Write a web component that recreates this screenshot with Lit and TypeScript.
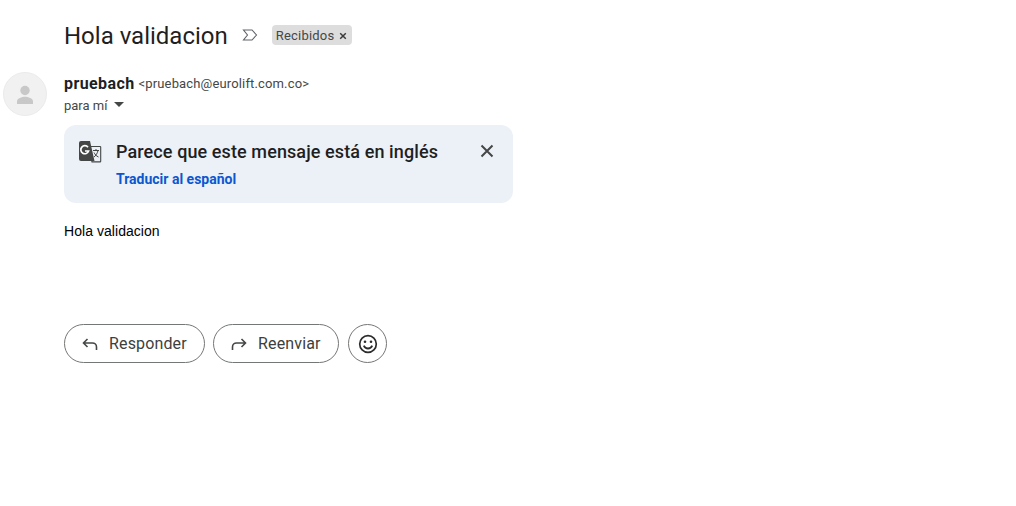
import { LitElement, html, css } from "lit";
import { customElement } from "lit/decorators.js";

@customElement("app-root")
export class AppRoot extends LitElement {
  static styles = css`
    :host {
      display: block;
      width: 1016px;
      height: 506px;
      background: #fff;
      overflow: hidden;
      font-family: Roboto, "Liberation Sans", sans-serif;
      color: #1f1f1f;
    }
    .subject {
      display: flex;
      align-items: center;
      height: 32px;
      margin: 19px 0 0 64px;
    }
    .subject h1 {
      margin: 0;
      padding-top: 2px;
      font-size: 24px;
      font-weight: 400;
      line-height: 32px;
      color: #1f1f1f;
    }
    .marker {
      display: block;
      margin-left: 14px;
      width: 16px;
      height: 14px;
    }
    .label {
      display: flex;
      align-items: center;
      height: 20px;
      margin-left: 14px;
      padding: 0 5px 0 4px;
      border-radius: 4px;
      background: #dddddd;
      color: #444746;
      font-size: 13px;
      letter-spacing: 0.2px;
    }
    .label svg {
      display: block;
      margin-left: 5px;
      margin-top: 1px;
    }
    .message {
      display: flex;
      margin-top: 21px;
      padding-left: 3px;
    }
    .avatar {
      flex: none;
      width: 44px;
      height: 44px;
      box-sizing: border-box;
      border-radius: 50%;
      border: 1px solid #ebebeb;
      background: #f1f1f1;
      margin-right: 17px;
    }
    .avatar svg {
      display: block;
    }
    .body {
      width: 449px;
    }
    .sender {
      display: flex;
      align-items: center;
      height: 20px;
      margin-top: 1px;
    }
    .name {
      font-size: 16px;
      font-weight: 700;
      letter-spacing: 0.4px;
      color: #1f1f1f;
    }
    .addr {
      margin-left: 4px;
      margin-top: 1px;
      font-size: 13px;
      letter-spacing: 0.15px;
      color: #444746;
    }
    .to {
      display: flex;
      align-items: center;
      height: 20px;
      margin-top: 2px;
      font-size: 13px;
      color: #444746;
    }
    .to i {
      display: block;
      margin-left: 7px;
      margin-top: -1px;
      border: 5px solid transparent;
      border-top-color: #444746;
      border-bottom-width: 0;
    }
    .banner {
      display: flex;
      box-sizing: border-box;
      height: 78px;
      margin-top: 10px;
      padding: 14px 16px 0 14px;
      border-radius: 12px;
      background: #ecf0f7;
    }
    .banner .trans {
      display: block;
      flex: none;
      margin-right: 14px;
    }
    .banner-text {
      flex: 1;
      min-width: 0;
      padding-top: 1px;
    }
    .banner-title {
      font-size: 18px;
      font-weight: 500;
      letter-spacing: 0.1px;
      line-height: 24px;
      color: #1f1f1f;
    }
    .banner-link {
      margin-top: 7px;
      font-size: 14px;
      font-weight: 700;
      line-height: 16px;
      color: #0b57d0;
    }
    .close {
      display: block;
      flex: none;
      margin-top: 2px;
    }
    .text {
      margin-top: 19px;
      font-family: "Liberation Sans", Arial, sans-serif;
      font-size: 14px;
      letter-spacing: 0.05px;
      line-height: 18px;
      color: #000;
    }
    .actions {
      display: flex;
      gap: 8px;
      margin: 84px 0 0 64px;
    }
    .btn {
      display: flex;
      align-items: center;
      box-sizing: border-box;
      height: 39px;
      border: 1px solid #747775;
      border-radius: 20px;
      color: #3c3f3e;
      font-size: 16px;
      font-weight: 400;
      letter-spacing: 0.15px;
      padding-left: 16px;
    }
    .btn svg {
      display: block;
      margin-right: 10px;
    }
    .reply {
      width: 141px;
    }
    .forward {
      width: 126px;
    }
    .emoji {
      width: 39px;
      padding: 0;
      justify-content: center;
      border-radius: 50%;
      margin-left: 1px;
    }
    .emoji svg {
      margin: 0;
    }
  `;

  render() {
    return html`
      <div class="subject">
        <h1>Hola validacion</h1>
        <svg class="marker" viewBox="0 0 16 14" fill="none" stroke="#5f6368" stroke-width="1.1">
          <path d="M1.500 2h8.500l4.500 5-4.500 5H1.500L5.500 7z" />
        </svg>
        <span class="label">
          Recibidos
          <svg width="8" height="8" viewBox="0 0 8 8" stroke="#3a3a3a" stroke-width="1.500">
            <path d="M1.200 1.200l5.600 5.600M6.800 1.200l-5.600 5.600" />
          </svg>
        </span>
      </div>
      <div class="message">
        <div class="avatar">
          <svg width="42" height="42" viewBox="0 0 42 42" fill="#c8c8c8">
            <circle cx="21" cy="17.500" r="4.700" />
            <path d="M13 31v-2.500c0-3.200 5-4.700 8-4.700s8 1.500 8 4.700V31z" />
          </svg>
        </div>
        <div class="body">
          <div class="sender">
            <span class="name">pruebach</span>
            <span class="addr">&lt;pruebach@eurolift.com.co&gt;</span>
          </div>
          <div class="to">para mí<i></i></div>
          <div class="banner">
            <svg class="trans" width="24" height="24" viewBox="0 0 24 24">
              <path fill="#ecf0f7" stroke="#444746" stroke-width="1.100" d="M10 7.500h12a.7.7 0 0 1 .7.7v14a.7.7 0 0 1-.7.7H14z" />
              <path fill="#444746" d="M3 2h9l4.500 20H3a2 2 0 0 1-2-2V4a2 2 0 0 1 2-2z" />
              <path fill="none" stroke="#fff" stroke-width="1.700" d="M10 8.300a4 4 0 1 0 .6 3.700H7" />
              <path fill="none" stroke="#444746" stroke-width="1" d="M15 11.500h6M18 10v1.500M20 11.500c-.6 3-2.500 5.500-4 6.500M16 13.500c.7 1.700 2.300 3.500 4.500 4.500" />
            </svg>
            <div class="banner-text">
              <div class="banner-title">Parece que este mensaje está en inglés</div>
              <div class="banner-link">Traducir al español</div>
            </div>
            <svg class="close" width="20" height="20" viewBox="0 0 20 20" stroke="#444746" stroke-width="2">
              <path d="M4.500 4.500l11 11M15.500 4.500l-11 11" />
            </svg>
          </div>
          <div class="text">Hola validacion</div>
        </div>
      </div>
      <div class="actions">
        <div class="btn reply">
          <svg width="18" height="18" viewBox="0 0 18 18" fill="none" stroke="#444746" stroke-width="1.600">
            <path d="M6.500 4L2.500 8l4 4M3 8h8.500a4 4 0 0 1 4 4v3" />
          </svg>
          Responder
        </div>
        <div class="btn forward">
          <svg width="18" height="18" viewBox="0 0 18 18" fill="none" stroke="#444746" stroke-width="1.600">
            <path d="M11.500 4l4 4-4 4M15 8H6.500a4 4 0 0 0-4 4v3" />
          </svg>
          Reenviar
        </div>
        <div class="btn emoji">
          <svg width="22" height="22" viewBox="0 0 22 22" fill="none" stroke="#2c2c2c" stroke-width="1.700">
            <circle cx="11" cy="11" r="8.300" />
            <path d="M6.800 12.600c.8 1.900 2.300 2.900 4.200 2.900s3.400-1 4.200-2.900" stroke-width="1.800" />
            <circle cx="8" cy="8.800" r="1.300" fill="#2c2c2c" stroke="none" />
            <circle cx="14" cy="8.800" r="1.300" fill="#2c2c2c" stroke="none" />
          </svg>
        </div>
      </div>
    `;
  }
}
